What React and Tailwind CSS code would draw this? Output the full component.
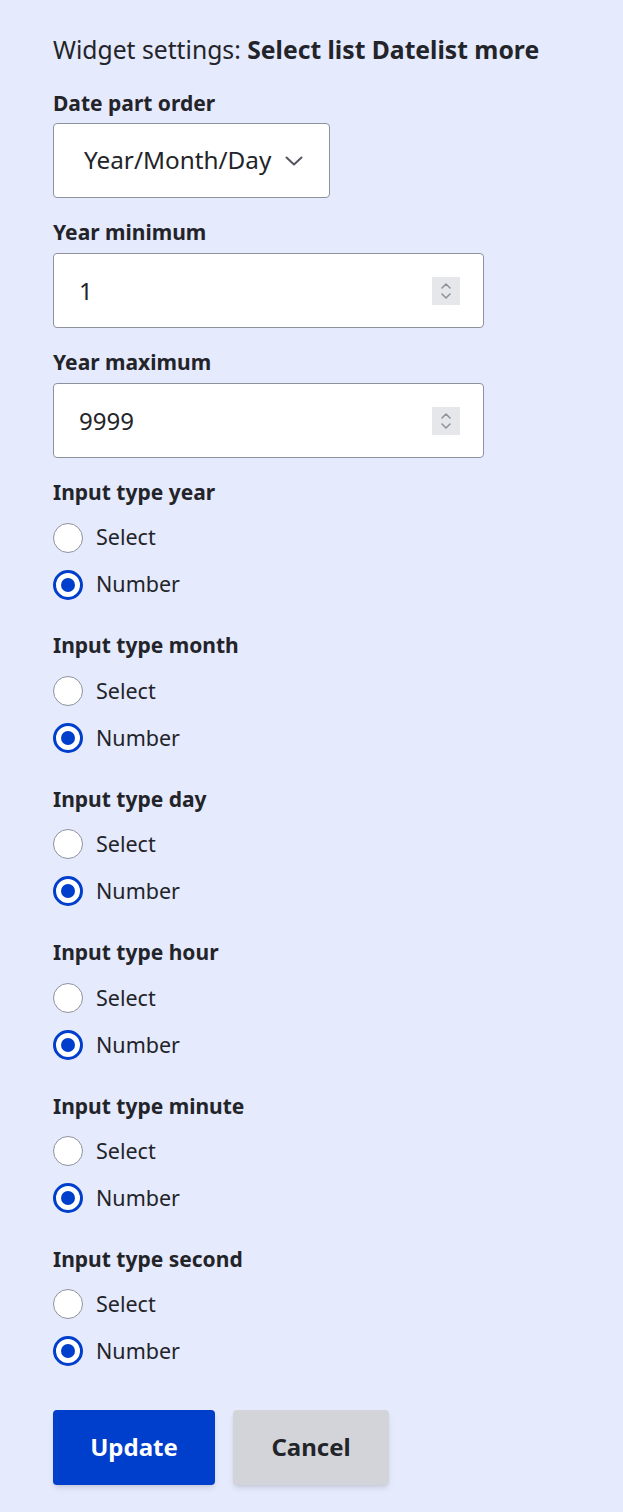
import React, { useState } from "react";

const FONT = { fontFamily: '"Noto Sans", "Open Sans", sans-serif' };

const groups = ["year", "month", "day", "hour", "minute", "second"];

// 数値入力のスピナー
const Spinner = () => (
    <div className="w-[28px] h-[28px] bg-[#e6e7eb] flex items-center justify-center">
        <svg width="14" height="22" viewBox="0 0 14 22" fill="none" stroke="#8e929c" strokeWidth="1.6" strokeLinecap="round" strokeLinejoin="round">
            <path d="M3 8l4-4 4 4" />
            <path d="M3 14l4 4 4-4" />
        </svg>
    </div>
);

const NumberField = ({ label, value }) => (
    <div className="flex flex-col">
        <label className="text-[21px] leading-[24px] font-bold text-[#232429] mb-[9px]">{label}</label>
        <div className="w-[431px] h-[75px] bg-white border border-[#8e929c] rounded-[4px] flex items-center justify-between pl-[25px] pr-[23px]">
            <span className="text-[24px] text-[#232429]">{value}</span>
            <Spinner />
        </div>
    </div>
);

const Radio = ({ checked, label, onClick }) => (
    <div className="h-[47px] flex items-center cursor-pointer" onClick={onClick}>
        {checked ? (
            <span className="w-[30px] h-[30px] rounded-full border-[3px] border-[#003ecc] bg-white flex items-center justify-center">
                <span className="w-[14px] h-[14px] rounded-full bg-[#003ecc]" />
            </span>
        ) : (
            <span className="w-[30px] h-[30px] rounded-full border border-[#8e929c] bg-white" />
        )}
        <span className="ml-[13px] text-[21.5px] text-[#232429]">{label}</span>
    </div>
);

const App = () => {
    const [types, setTypes] = useState(
        Object.fromEntries(groups.map((g) => [g, "number"]))
    );

    return (
        <div className="min-h-[1512px] bg-[#e5eafd] pl-[53px] pt-[35px]" style={FONT}>
            <h2 className="text-[24.7px] leading-[30px] text-[#232429] mb-[26px]">
                Widget settings: <span className="font-bold">Select list Datelist more</span>
            </h2>

            <div className="flex flex-col">
                <label className="text-[21px] leading-[24px] font-bold text-[#232429] mb-[8px]">Date part order</label>
                <div className="w-[277px] h-[75px] bg-white border border-[#8e929c] rounded-[4px] flex items-center pl-[30px]">
                    <span className="text-[24.3px] text-[#232429]">Year/Month/Day</span>
                    <svg className="ml-[14px]" width="18" height="10" viewBox="0 0 18 10" fill="none" stroke="#545560" strokeWidth="2" strokeLinecap="round" strokeLinejoin="round">
                        <path d="M1.5 1.5l7.5 7 7.5-7" />
                    </svg>
                </div>
            </div>

            <div className="mt-[22px]">
                <NumberField label="Year minimum" value="1" />
            </div>
            <div className="mt-[22px]">
                <NumberField label="Year maximum" value="9999" />
            </div>

            <div className="mt-[22px] flex flex-col gap-[25.4px]">
                {groups.map((g) => (
                    <div key={g} className="flex flex-col">
                        <div className="text-[21px] leading-[24px] font-bold text-[#232429] mb-[10px]">Input type {g}</div>
                        <Radio
                            label="Select"
                            checked={types[g] === "select"}
                            onClick={() => setTypes((prev) => ({ ...prev, [g]: "select" }))}
                        />
                        <Radio
                            label="Number"
                            checked={types[g] === "number"}
                            onClick={() => setTypes((prev) => ({ ...prev, [g]: "number" }))}
                        />
                    </div>
                ))}
            </div>

            <div className="mt-[35px] flex gap-[18px]">
                <button className="w-[162px] h-[75px] bg-[#003ecc] text-white text-[24px] font-bold rounded-[4px] shadow-md">
                    Update
                </button>
                <button className="w-[156px] h-[75px] bg-[#d3d4d9] text-[#232429] text-[24px] font-bold rounded-[4px] shadow-md">
                    Cancel
                </button>
            </div>
        </div>
    );
};

export default App;
